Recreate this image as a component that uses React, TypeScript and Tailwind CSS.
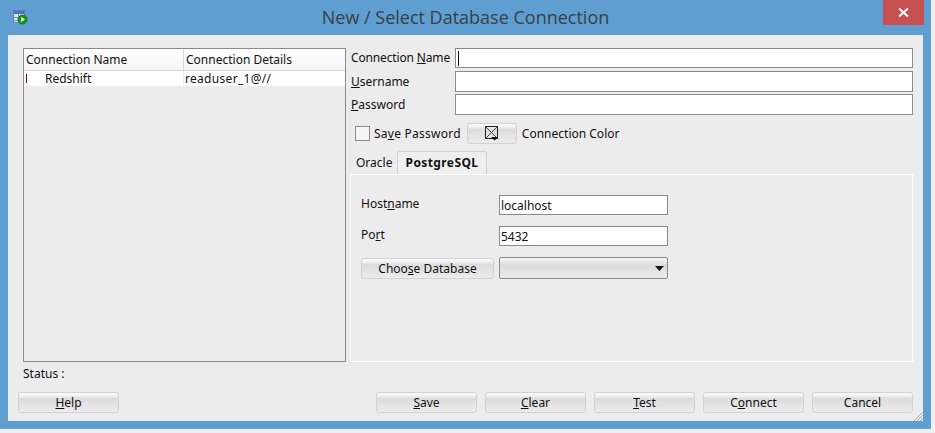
import type { ReactNode } from "react"

const uiFont = "font-['Noto_Sans','Open_Sans',sans-serif]"

function DialogButton({ children, className = "" }: { children: ReactNode; className?: string }) {
  return (
    <button className={`h-[21px] rounded-[3px] border border-[#d2d2d2] bg-[linear-gradient(#fafafa_0%,#f1f1f1_15%,#dcdcdc_30%,#ececec_100%)] text-[12px] leading-none text-[#111] ${className}`}>
      {children}
    </button>
  )
}

function TextField({ value, caret, className = "" }: { value?: string; caret?: boolean; className?: string }) {
  return (
    <div className={`flex items-center border border-[#8a8a8a] bg-white pl-[1px] pt-[1px] text-[12px] text-[#111] ${className}`}>
      {caret && <span className="ml-[1px] h-[15px] w-[1px] bg-[#111]" />}
      {value}
    </div>
  )
}

function WindowIcon() {
  return (
    <svg width="15" height="15" viewBox="0 0 15 15">
      <rect x="0.5" y="0.5" width="11" height="12" fill="#dbe5f6" stroke="#5f7fc4" />
      <rect x="1" y="1" width="10" height="3" fill="#4a72c4" />
      <path d="M0 7.5h11M0 10.5h11M5.5 4v9" stroke="#6f8fd0" />
      <circle cx="9.5" cy="9.5" r="4.5" fill="#139a13" stroke="#0b7a0b" />
      <path d="M8 7l4 2.5-4 2.5z" fill="#fff" />
    </svg>
  )
}

export default function App() {
  return (
    <div className={`h-[433px] w-[935px] overflow-hidden bg-[#eef0f2] ${uiFont}`}>
      <div className="flex h-[429px] w-[931px] flex-col bg-[#5f9ed1]">
        {/* Title bar */}
        <div className="grid h-[35px] shrink-0 grid-cols-[1fr_auto_1fr]">
          <div className="pl-[13px] pt-[10px]">
            <WindowIcon />
          </div>
          <div className="pt-[5px] font-['Open_Sans',sans-serif] text-[18px] leading-[24px] text-[#3a3f44]">
            New / Select Database Connection
          </div>
          <div className="flex justify-end pr-[7px]">
            <div className="flex h-[25px] w-[41px] items-center justify-center bg-[#c75050]">
              <svg width="11" height="9" viewBox="0 0 11 9">
                <path d="M1 0.5l9 8M10 0.5l-9 8" stroke="#fff" strokeWidth="2" />
              </svg>
            </div>
          </div>
        </div>

        {/* Dialog body */}
        <div className="mx-[8px] flex h-[386px] flex-col bg-[#ececec]">
          <div className="ml-[15px] mr-[10px] mt-[13px] flex h-[314px] gap-[5px]">
            {/* Connection list */}
            <div className="h-full w-[323px] shrink-0 border border-[#8a8a8a] text-[12px] text-[#111]">
              <div className="flex h-[22px] border-b border-[#d4d4d4] bg-[linear-gradient(#ffffff,#f4f4f4)]">
                <div className="flex w-[160px] items-center border-r border-[#d8d8d8] pl-[2px]">Connection Name</div>
                <div className="flex flex-1 items-center pl-[2px]">Connection Details</div>
              </div>
              <div className="flex h-[15px] items-center bg-white">
                <div className="flex h-full w-[160px] items-center border-r border-[#eeeeee] pl-[2px]">
                  <span className="h-[9px] w-[1px] bg-[#7a1010]" />
                  <span className="ml-[18px]">Redshift</span>
                </div>
                <div className="pl-[1px] tracking-[0.3px]">readuser_1@//</div>
              </div>
            </div>

            {/* Connection form */}
            <div className="flex min-w-0 flex-1 flex-col text-[12px] text-[#111]">
              <div className="flex h-[20px] items-center">
                <div className="w-[104px] shrink-0 tracking-[-0.15px]">Connection <u>N</u>ame</div>
                <TextField caret className="h-full flex-1" />
              </div>
              <div className="mt-[3px] flex h-[21px] items-center">
                <div className="w-[104px] shrink-0"><u>U</u>sername</div>
                <TextField className="h-full flex-1" />
              </div>
              <div className="mt-[2px] flex h-[21px] items-center">
                <div className="w-[104px] shrink-0"><u>P</u>assword</div>
                <TextField className="h-full flex-1" />
              </div>

              <div className="ml-[4px] mt-[8px] flex h-[21px] items-center">
                <span className="h-[15px] w-[15px] shrink-0 border border-[#8a8a8a] bg-[#f4f4f4]" />
                <span className="ml-[4px] tracking-[0.25px]">Sa<u>v</u>e Password</span>
                <DialogButton className="ml-[6px] flex w-[50px] items-center justify-center">
                  <svg width="16" height="15" viewBox="0 0 16 15">
                    <rect x="1.5" y="0.5" width="12" height="12" fill="none" stroke="#222" />
                    <path d="M1.5 0.5l12 12M13.5 0.5l-12 12" stroke="#444" />
                    <path d="M7 11h7l-3.5 3.5z" fill="#111" />
                  </svg>
                </DialogButton>
                <span className="ml-[5px]">Connection Color</span>
              </div>

              {/* Tabs */}
              <div className="mt-[8px] flex h-[22px] items-end">
                <div className="ml-[5px] w-[41px] pb-[2px]">Oracle</div>
                <div className="flex h-[23px] w-[90px] items-center justify-center rounded-t-[3px] border border-b-0 border-[#d0d0d0] bg-[#efefef] font-bold tracking-[0.4px]">
                  PostgreSQL
                </div>
              </div>
              <div className="-ml-[1px] flex flex-1 flex-col border border-white pl-[10px] pr-[9px] pt-[20px]">
                <div className="flex h-[20px]">
                  <div className="w-[138px] shrink-0">Host<u>n</u>ame</div>
                  <TextField value="localhost" className="h-full w-[169px]" />
                </div>
                <div className="mt-[11px] flex h-[20px]">
                  <div className="w-[138px] shrink-0">Po<u>r</u>t</div>
                  <TextField value="5432" className="h-full w-[169px]" />
                </div>
                <div className="mt-[11px] flex h-[22px] items-center">
                  <DialogButton className="w-[133px] pt-[2px]">Choo<u>s</u>e Database</DialogButton>
                  <div className="ml-[5px] flex h-[22px] w-[169px] items-center justify-end rounded-[2px] border border-[#8a8a8a] bg-[linear-gradient(#f4f4f4,#dcdcdc_40%,#ececec)] pr-[3px]">
                    <svg width="9" height="5" viewBox="0 0 9 5">
                      <path d="M0 0h9L4.5 5z" fill="#111" />
                    </svg>
                  </div>
                </div>
              </div>
            </div>
          </div>

          <div className="ml-[15px] mt-[4px] text-[12px] leading-[16px] text-[#111]">Status :</div>

          <div className="relative mt-[10px] flex flex-1 items-start pl-[10px] pr-[10px]">
            <DialogButton className="w-[101px]"><u>H</u>elp</DialogButton>
            <div className="ml-auto flex gap-[8px]">
              <DialogButton className="w-[101px]"><u>S</u>ave</DialogButton>
              <DialogButton className="w-[101px]"><u>C</u>lear</DialogButton>
              <DialogButton className="w-[101px]"><u>T</u>est</DialogButton>
              <DialogButton className="w-[101px]">C<u>o</u>nnect</DialogButton>
              <DialogButton className="w-[101px]">Cancel</DialogButton>
            </div>
            <svg className="absolute bottom-0 right-0" width="9" height="9" viewBox="0 0 9 9">
              <path d="M9 0L0 9M9 3L3 9M9 6L6 9" stroke="#a8a8a8" />
            </svg>
          </div>
        </div>
      </div>
    </div>
  )
}
